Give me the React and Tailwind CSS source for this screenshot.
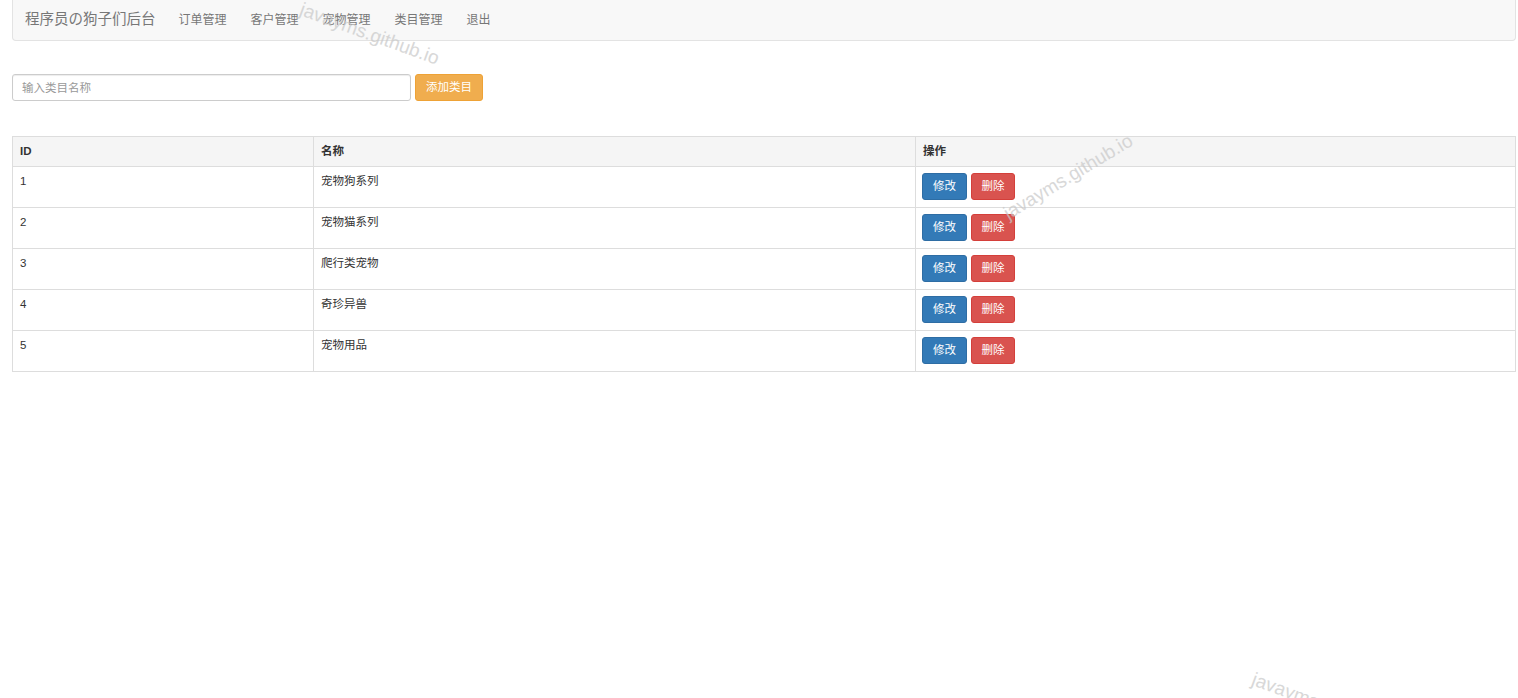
import { useState } from "react";

const categories = [
  { id: 1, name: "宠物狗系列" },
  { id: 2, name: "宠物猫系列" },
  { id: 3, name: "爬行类宠物" },
  { id: 4, name: "奇珍异兽" },
  { id: 5, name: "宠物用品" },
];

const navLinks = ["订单管理", "客户管理", "宠物管理", "类目管理", "退出"];

const font = {
  fontFamily: '"Liberation Sans", "Noto Sans CJK SC", sans-serif',
};

const Watermark = ({ className }) => (
  <div
    className={`pointer-events-none absolute select-none text-[19px] text-[#c8c8c8] opacity-70 ${className}`}
  >
    javayms.github.io
  </div>
);

const App = () => {
  const [name, setName] = useState("");

  return (
    <div
      className="relative min-h-[698px] overflow-hidden bg-white pl-[12px] pr-[2px] text-[11.5px] text-[#333]"
      style={font}
    >
      <nav className="flex h-[41px] items-center rounded-b-[4px] border-x border-b border-[#e3e3e3] bg-[#f8f8f8] pl-[12px] text-[#777]">
        <span className="mr-[11px] text-[14.5px]">程序员の狗子们后台</span>
        {navLinks.map((link) => (
          <a key={link} href="#" className="px-[12px] text-[12px] text-[#777]">
            {link}
          </a>
        ))}
      </nav>

      <div className="mt-[33px] flex items-center gap-[4px]">
        <input
          value={name}
          onChange={(e) => setName(e.target.value)}
          placeholder="输入类目名称"
          className="h-[27px] w-[399px] rounded-[3px] border border-[#ccc] px-[9px] text-[11.5px] shadow-[inset_0_1px_1px_rgba(0,0,0,0.075)] outline-none placeholder:text-[#999]"
        />
        <button className="h-[27px] w-[68px] rounded-[3px] border border-[#eea236] bg-[#f0ad4e] text-[11.5px] text-white">
          添加类目
        </button>
      </div>

      <table className="mt-[35px] w-[1504px] table-fixed border-collapse border border-[#ddd]">
        <thead>
          <tr className="h-[30px] bg-[#f5f5f5] text-left">
            <th className="w-[301px] border border-[#ddd] px-[7px] font-bold">ID</th>
            <th className="w-[602px] border border-[#ddd] px-[7px] font-bold">名称</th>
            <th className="border border-[#ddd] px-[7px] font-bold">操作</th>
          </tr>
        </thead>
        <tbody>
          {categories.map((c) => (
            <tr key={c.id} className="h-[41px]">
              <td className="border border-[#ddd] px-[7px] pt-[6px] align-top leading-[17px]">
                {c.id}
              </td>
              <td className="border border-[#ddd] px-[7px] pt-[6px] align-top leading-[17px]">
                {c.name}
              </td>
              <td className="border border-[#ddd] px-[6px] py-[6px] align-top">
                <div className="flex gap-[4px]">
                  <button className="h-[27px] w-[45px] rounded-[3px] border border-[#2e6da4] bg-[#337ab7] text-[11.5px] text-white">
                    修改
                  </button>
                  <button className="h-[27px] w-[44px] rounded-[3px] border border-[#d43f3a] bg-[#d9534f] text-[11.5px] text-white">
                    删除
                  </button>
                </div>
              </td>
            </tr>
          ))}
        </tbody>
      </table>

      <Watermark className="left-[296px] top-[20px] rotate-[20deg]" />
      <Watermark className="left-[995px] top-[163px] -rotate-[31deg]" />
      <Watermark className="left-[1248px] top-[690px] rotate-[20deg]" />
    </div>
  );
};

export default App;
